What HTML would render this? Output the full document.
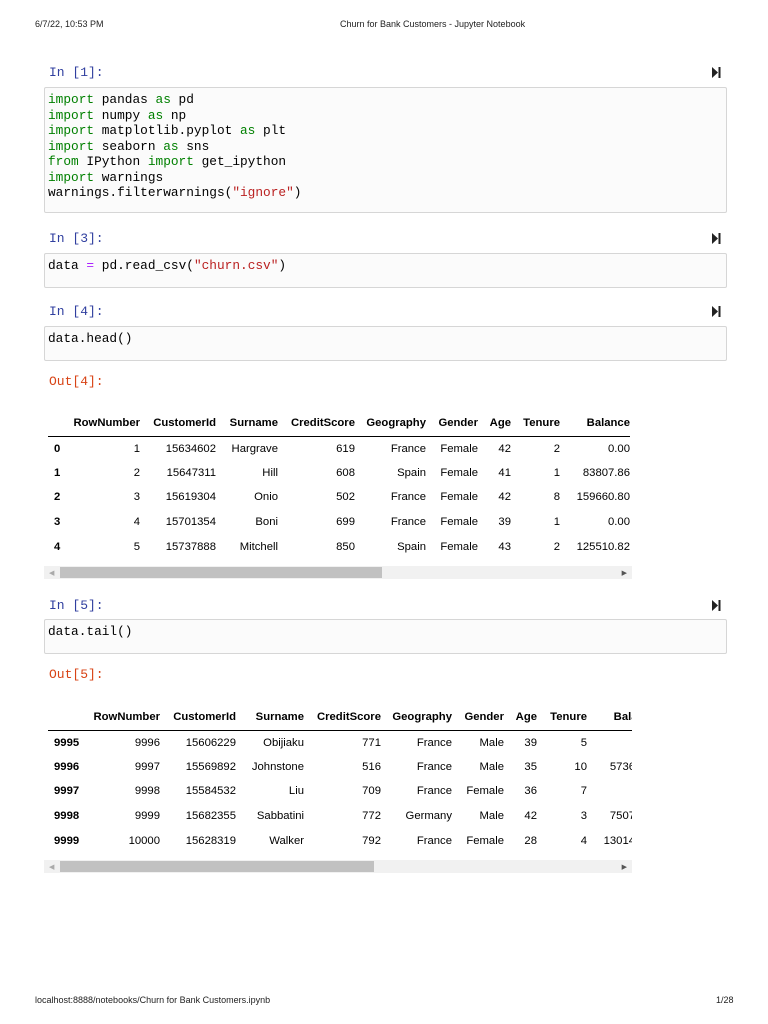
<!DOCTYPE html>
<html><head><meta charset="utf-8"><style>
*{margin:0;padding:0;box-sizing:border-box}
body{width:768px;height:1024px;background:#fff;position:relative;overflow:hidden;font-family:"Liberation Sans",sans-serif;color:#000}
.hdr{position:absolute;font-size:9px;top:19px;color:#222}
.p{position:absolute;left:49px;font-family:"Liberation Mono",monospace;font-size:13px;color:#303F9F}
.o{color:#D84315}
.run{position:absolute;left:711px;width:10px;height:11px}
.box{position:absolute;left:44px;width:683px;border:1px solid #d6d6d6;background:#fbfbfb;border-radius:2px}
.code{position:absolute;left:48px;font-family:"Liberation Mono",monospace;font-size:12.8px;line-height:15.5px;white-space:pre;color:#000}
.k{color:#008000;font-weight:normal}.s{color:#BA2121}.op{color:#AA22FF}
.tw{position:absolute;left:48px;width:584px;overflow:hidden}
table{border-collapse:collapse;table-layout:fixed;font-size:11.3px;white-space:nowrap}
td,th{text-align:right;padding:0;height:24.6px;overflow:visible}
th{font-weight:bold}
thead th{height:26px;border-bottom:1px solid #000}
tbody th{text-align:left;padding-left:6px}
.sb{position:absolute;left:44px;width:588px;height:13px;background:#f1f1f1}
.th{position:absolute;left:16px;top:1px;height:11px;background:#c1c1c1}
.al{position:absolute;left:5px;top:3px;font-size:7px;color:#aaa}
.ar{position:absolute;right:5px;top:3px;font-size:7px;color:#555}
</style></head><body>
<div class="hdr" style="left:35px">6/7/22, 10:53 PM</div>
<div class="hdr" style="left:340px">Churn for Bank Customers - Jupyter Notebook</div>

<div class="p" style="top:65px">In [1]:</div>
<svg class="run" style="top:67px" viewBox="0 0 10 11"><path d="M1 0L7 5.5L1 11Z" fill="#222"/><rect x="7.5" y="0" width="2" height="11" fill="#222"/></svg>
<div class="box" style="top:87px;height:126px"></div>
<div class="code" style="top:92px"><span class="k">import</span> pandas <span class="k">as</span> pd
<span class="k">import</span> numpy <span class="k">as</span> np
<span class="k">import</span> matplotlib.pyplot <span class="k">as</span> plt
<span class="k">import</span> seaborn <span class="k">as</span> sns
<span class="k">from</span> IPython <span class="k">import</span> get_ipython
<span class="k">import</span> warnings
warnings.filterwarnings(<span class="s">"ignore"</span>)</div>

<div class="p" style="top:231px">In [3]:</div>
<svg class="run" style="top:233px" viewBox="0 0 10 11"><path d="M1 0L7 5.5L1 11Z" fill="#222"/><rect x="7.5" y="0" width="2" height="11" fill="#222"/></svg>
<div class="box" style="top:253px;height:35px"></div>
<div class="code" style="top:258px">data <span class="op">=</span> pd.read_csv(<span class="s">"churn.csv"</span>)</div>

<div class="p" style="top:304px">In [4]:</div>
<svg class="run" style="top:306px" viewBox="0 0 10 11"><path d="M1 0L7 5.5L1 11Z" fill="#222"/><rect x="7.5" y="0" width="2" height="11" fill="#222"/></svg>
<div class="box" style="top:326px;height:35px"></div>
<div class="code" style="top:331px">data.head()</div>

<div class="p o" style="top:374px">Out[4]:</div>
<div class="tw" style="top:410px">
<table style="width:582px">
<colgroup><col style="width:24px"><col style="width:68px"><col style="width:76px"><col style="width:62px"><col style="width:77px"><col style="width:71px"><col style="width:52px"><col style="width:33px"><col style="width:49px"><col style="width:70px"></colgroup>
<thead><tr><th></th><th>RowNumber</th><th>CustomerId</th><th>Surname</th><th>CreditScore</th><th>Geography</th><th>Gender</th><th>Age</th><th>Tenure</th><th>Balance</th></tr></thead>
<tbody>
<tr><th>0</th><td>1</td><td>15634602</td><td>Hargrave</td><td>619</td><td>France</td><td>Female</td><td>42</td><td>2</td><td>0.00</td></tr>
<tr><th>1</th><td>2</td><td>15647311</td><td>Hill</td><td>608</td><td>Spain</td><td>Female</td><td>41</td><td>1</td><td>83807.86</td></tr>
<tr><th>2</th><td>3</td><td>15619304</td><td>Onio</td><td>502</td><td>France</td><td>Female</td><td>42</td><td>8</td><td>159660.80</td></tr>
<tr><th>3</th><td>4</td><td>15701354</td><td>Boni</td><td>699</td><td>France</td><td>Female</td><td>39</td><td>1</td><td>0.00</td></tr>
<tr><th>4</th><td>5</td><td>15737888</td><td>Mitchell</td><td>850</td><td>Spain</td><td>Female</td><td>43</td><td>2</td><td>125510.82</td></tr>
</tbody></table></div>
<div class="sb" style="top:566px"><span class="al">◀</span><div class="th" style="width:322px"></div><span class="ar">▶</span></div>

<div class="p" style="top:598px">In [5]:</div>
<svg class="run" style="top:600px" viewBox="0 0 10 11"><path d="M1 0L7 5.5L1 11Z" fill="#222"/><rect x="7.5" y="0" width="2" height="11" fill="#222"/></svg>
<div class="box" style="top:619px;height:35px"></div>
<div class="code" style="top:624px">data.tail()</div>

<div class="p o" style="top:667px">Out[5]:</div>
<div class="tw" style="top:704px">
<table style="width:609px">
<colgroup><col style="width:44px"><col style="width:68px"><col style="width:76px"><col style="width:68px"><col style="width:77px"><col style="width:71px"><col style="width:52px"><col style="width:33px"><col style="width:50px"><col style="width:70px"></colgroup>
<thead><tr><th></th><th>RowNumber</th><th>CustomerId</th><th>Surname</th><th>CreditScore</th><th>Geography</th><th>Gender</th><th>Age</th><th>Tenure</th><th>Balance</th></tr></thead>
<tbody>
<tr><th>9995</th><td>9996</td><td>15606229</td><td>Obijiaku</td><td>771</td><td>France</td><td>Male</td><td>39</td><td>5</td><td>0.00</td></tr>
<tr><th>9996</th><td>9997</td><td>15569892</td><td>Johnstone</td><td>516</td><td>France</td><td>Male</td><td>35</td><td>10</td><td>57369.61</td></tr>
<tr><th>9997</th><td>9998</td><td>15584532</td><td>Liu</td><td>709</td><td>France</td><td>Female</td><td>36</td><td>7</td><td>0.00</td></tr>
<tr><th>9998</th><td>9999</td><td>15682355</td><td>Sabbatini</td><td>772</td><td>Germany</td><td>Male</td><td>42</td><td>3</td><td>75075.31</td></tr>
<tr><th>9999</th><td>10000</td><td>15628319</td><td>Walker</td><td>792</td><td>France</td><td>Female</td><td>28</td><td>4</td><td>130142.79</td></tr>
</tbody></table></div>
<div class="sb" style="top:860px"><span class="al">◀</span><div class="th" style="width:314px"></div><span class="ar">▶</span></div>

<div class="hdr" style="left:35px;top:995px">localhost:8888/notebooks/Churn for Bank Customers.ipynb</div>
<div class="hdr" style="left:716px;top:995px">1/28</div>
</body></html>
